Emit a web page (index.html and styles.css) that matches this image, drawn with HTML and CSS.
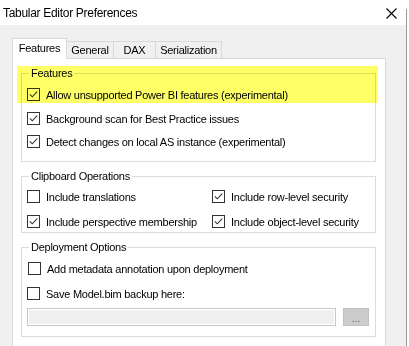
FILE: index.html
```html
<!DOCTYPE html>
<html>
<head>
<meta charset="utf-8">
<link rel="stylesheet" href="styles.css">
</head>
<body>
<div class="dialog">
  <div class="titlebar">
    <span class="title">Tabular Editor Preferences</span>
    <svg class="close" width="11" height="11" viewBox="0 0 11 11"><path d="M0.5 0.5 L10.5 10.5 M10.5 0.5 L0.5 10.5" stroke="#000" stroke-width="1.1" fill="none"/></svg>
  </div>
  <div class="content">
    <div class="tabs">
      <div class="tab active w-features">Features</div>
      <div class="tab w-general">General</div>
      <div class="tab w-dax">DAX</div>
      <div class="tab w-serial">Serialization</div>
    </div>
    <div class="page">
      <div class="group g-features">
        <div class="group-title">Features</div>
        <div class="row r1"><span class="cb checked"></span><span class="lbl">Allow unsupported Power BI features (experimental)</span></div>
        <div class="row r2"><span class="cb checked"></span><span class="lbl">Background scan for Best Practice issues</span></div>
        <div class="row r3"><span class="cb checked"></span><span class="lbl">Detect changes on local AS instance (experimental)</span></div>
      </div>
      <div class="group g-clip">
        <div class="group-title">Clipboard Operations</div>
        <div class="grid">
          <div class="row"><span class="cb"></span><span class="lbl">Include translations</span></div>
          <div class="row"><span class="cb checked"></span><span class="lbl">Include row-level security</span></div>
          <div class="row"><span class="cb checked"></span><span class="lbl">Include perspective membership</span></div>
          <div class="row"><span class="cb checked"></span><span class="lbl">Include object-level security</span></div>
        </div>
      </div>
      <div class="group g-deploy">
        <div class="group-title">Deployment Options</div>
        <div class="row d1"><span class="cb"></span><span class="lbl">Add metadata annotation upon deployment</span></div>
        <div class="row d2"><span class="cb"></span><span class="lbl">Save Model.bim backup here:</span></div>
        <div class="pathrow">
          <div class="textbox"></div>
          <div class="btn">...</div>
        </div>
      </div>
    </div>
    <div class="highlight"></div>
  </div>
</div>
<div class="edge"></div>
<div class="behind"></div>
</body>
</html>
```
FILE: styles.css
```css
html, body {
  margin: 0;
  padding: 0;
}
body {
  width: 409px;
  height: 346px;
  overflow: hidden;
  display: flex;
  background: #fff;
  font-family: "Liberation Sans", Arial, sans-serif;
  font-size: 11px;
  color: #000;
}
.dialog {
  width: 406px;
  height: 346px;
  background: #f0f0f0;
  display: flex;
  flex-direction: column;
}
.titlebar {
  height: 25px;
  flex: none;
  background: #fff;
  display: flex;
  align-items: center;
  justify-content: space-between;
  padding: 0 9px 0 3px;
}
.title {
  font-size: 12px;
  letter-spacing: -0.3px;
}
.close {
  display: block;
  margin-top: 1px;
}
.content {
  flex: 1;
  position: relative;
  display: flex;
  flex-direction: column;
  padding: 13px 20px 0 12px;
  min-height: 0;
}
.tabs {
  display: flex;
  align-items: flex-end;
  height: 21px;
  margin-bottom: -1px;
  position: relative;
  z-index: 1;
  flex: none;
}
.tab {
  box-sizing: border-box;
  height: 17px;
  margin-bottom: 1px;
  border-top: 1px solid #d9d9d9;
  border-right: 1px solid #d9d9d9;
  background: #f0f0f0;
  display: flex;
  align-items: center;
  justify-content: center;
  letter-spacing: -0.25px;
}
.tab.active {
  height: 21px;
  margin-bottom: 0;
  background: #fff;
  border-left: 1px solid #d9d9d9;
  padding-bottom: 2px;
}
.w-features { width: 55px; }
.w-general { width: 47px; }
.w-dax { width: 42px; }
.w-serial { width: 66px; }
.page {
  flex: 1;
  background: #fff;
  border: 1px solid #d9d9d9;
  border-bottom: none;
  padding: 14px 9px 0 8px;
  display: flex;
  flex-direction: column;
}
.group {
  border: 1px solid #dcdcdc;
  display: flex;
  flex-direction: column;
  padding-left: 5px;
}
.group-title {
  align-self: flex-start;
  margin: -7px 0 0 2px;
  padding: 0 2px;
  line-height: 13px;
  background: #fff;
  letter-spacing: -0.25px;
}
.row {
  display: flex;
  align-items: center;
  height: 13px;
}
.lbl {
  margin-left: 6px;
  letter-spacing: -0.25px;
  white-space: nowrap;
}
.cb {
  box-sizing: border-box;
  width: 13px;
  height: 13px;
  flex: none;
  border: 1px solid #333;
  background: #fff;
}
.cb.checked {
  background: #fff url("data:image/svg+xml;utf8,<svg xmlns='http://www.w3.org/2000/svg' width='11' height='11' viewBox='0 0 11 11'><polyline points='1.8,5.3 4.3,7.8 9.2,2.6' fill='none' stroke='%23333' stroke-width='1.1'/></svg>") no-repeat 0 0;
}
.g-features { padding-bottom: 13px; }
.g-features .r1 { margin-top: 8px; }
.g-features .r2 { margin-top: 11px; }
.g-features .r3 { margin-top: 10px; }
.g-clip {
  margin-top: 14px;
  padding-bottom: 4px;
}
.grid {
  display: grid;
  grid-template-columns: 185px auto;
  row-gap: 12px;
  margin-top: 7px;
}
.g-deploy {
  margin-top: 14px;
  padding-bottom: 10px;
}
.g-deploy .d1 { margin-top: 8px; padding-left: 1px; }
.g-deploy .d2 { margin-top: 12px; }
.pathrow {
  display: flex;
  margin-top: 8px;
  gap: 7px;
}
.textbox {
  box-sizing: border-box;
  width: 309px;
  height: 18px;
  border: 1px solid #c8c8c8;
  box-shadow: inset 0 0 0 1px #fff;
  background: #f0f0f0;
}
.btn {
  box-sizing: border-box;
  width: 26px;
  height: 18px;
  border: 1px solid #bfbfbf;
  background: #cccccc;
  color: #6d6d6d;
  text-align: center;
  line-height: 20px;
  font-size: 10px;
}
.highlight {
  position: absolute;
  left: 17px;
  top: 41px;
  width: 361px;
  height: 37px;
  background: #ffff66;
  mix-blend-mode: multiply;
  z-index: 2;
}
.edge {
  width: 1px;
  margin-top: 9px;
  height: 337px;
  background: #9a9a9a;
}
.behind {
  width: 2px;
  background: #fff;
}
```
